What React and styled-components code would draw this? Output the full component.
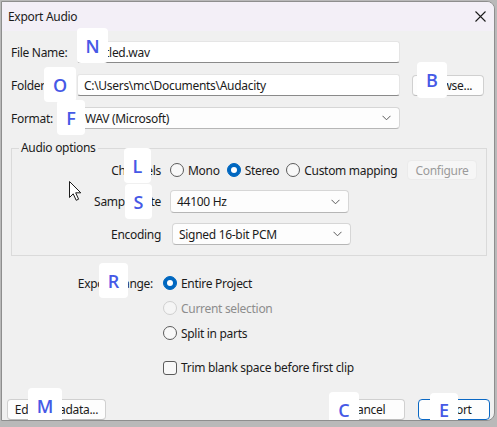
import React from 'react';
import styled, { createGlobalStyle } from 'styled-components';

const GlobalStyle = createGlobalStyle`
  html, body {
    margin: 0;
    padding: 0;
    background: #b9b9b9;
  }
  body {
    font-family: 'Noto Sans', 'Open Sans', sans-serif;
    font-size: 12px;
    letter-spacing: -0.3px;
    color: #1b1b1b;
  }
  * { box-sizing: border-box; }
`;

const Window = styled.div`
  position: relative;
  margin: 1px 0 0 1px;
  width: 494px;
  height: 420px;
  border: 1px solid #8e8e8e;
  border-radius: 0 8px 8px 0;
  background: #f0f0f0;
  display: flex;
  flex-direction: column;
  overflow: hidden;
`;

const TitleBar = styled.div`
  height: 29px;
  flex: none;
  display: flex;
  align-items: center;
  justify-content: space-between;
  padding: 0 8px 0 6px;
  background: #f3eff7;
  font-size: 12px;
`;

const Body = styled.div`
  flex: 1;
  display: flex;
  flex-direction: column;
  padding: 10px 7px 0 9px;
`;

const TopGrid = styled.div`
  display: grid;
  grid-template-columns: 66px 323px 84px;
  grid-auto-rows: 22px;
  row-gap: 11px;
  align-items: center;
`;

const Label = styled.span`
  white-space: nowrap;
  text-align: ${(p) => (p.$right ? 'right' : 'left')};
`;

const TextInput = styled.div`
  height: 22px;
  display: flex;
  align-items: center;
  padding: 0 6px;
  background: #ffffff;
  border: 1px solid #e5e5e5;
  border-bottom-color: #8a8a8a;
  border-radius: 3px;
  white-space: nowrap;
  overflow: hidden;
`;

const Select = styled.div`
  height: ${(p) => p.$h || 22}px;
  width: ${(p) => (p.$w ? `${p.$w}px` : 'auto')};
  display: flex;
  align-items: center;
  justify-content: space-between;
  padding: 0 8px 0 6px;
  margin-left: ${(p) => p.$ml || 0}px;
  background: #fdfdfd;
  border: 1px solid #d6d6d6;
  border-bottom-color: #b6b6b6;
  border-radius: 4px;
  white-space: nowrap;
`;

const Button = styled.div`
  height: ${(p) => p.$h || 21}px;
  width: ${(p) => p.$w}px;
  display: flex;
  align-items: center;
  justify-content: center;
  flex: none;
  justify-self: end;
  background: ${(p) => (p.$disabled ? '#f6f6f6' : '#fdfdfd')};
  color: ${(p) => (p.$disabled ? '#9b9b9b' : '#1b1b1b')};
  border: 1px solid
    ${(p) => (p.$primary ? '#0a68c4' : p.$disabled ? '#ebebeb' : '#d0d0d0')};
  border-bottom-color: ${(p) =>
    p.$primary ? '#0a68c4' : p.$disabled ? '#ebebeb' : '#bdbdbd'};
  border-radius: 4px;
  white-space: nowrap;
`;

const Group = styled.fieldset`
  margin: 11px 0 0 0;
  padding: 4px 9px 10px 0;
  border: 1px solid #dadada;
  border-radius: 0;
  min-width: 0;
`;

const Legend = styled.legend`
  margin-left: 7px;
  padding: 0 2px;
  line-height: 16px;
`;

const GroupGrid = styled.div`
  display: grid;
  grid-template-columns: 149px 1fr;
  grid-template-rows: 20px 23px 22px;
  column-gap: 9px;
  row-gap: 10px;
  align-items: center;
`;

const RadioRow = styled.div`
  display: flex;
  align-items: center;
  gap: 7px;
`;

const Option = styled.div`
  display: flex;
  align-items: center;
  gap: 4px;
  white-space: nowrap;
  color: ${(p) => (p.$disabled ? '#8d8d8d' : 'inherit')};
`;

const RadioDot = styled.span`
  width: 14px;
  height: 14px;
  border-radius: 50%;
  flex: none;
  background: ${(p) => (p.$checked ? '#0067c0' : p.$disabled ? '#f5f5f5' : '#f8f8f8')};
  border: 1px solid
    ${(p) => (p.$checked ? '#0067c0' : p.$disabled ? '#cfcfcf' : '#5b5b5b')};
  display: flex;
  align-items: center;
  justify-content: center;
  &::after {
    content: '';
    display: ${(p) => (p.$checked ? 'block' : 'none')};
    width: 6px;
    height: 6px;
    border-radius: 50%;
    background: #ffffff;
  }
`;

const CheckBox = styled.span`
  width: 14px;
  height: 14px;
  flex: none;
  border-radius: 3px;
  background: #f8f8f8;
  border: 1px solid #5b5b5b;
`;

const PushRight = styled.div`
  margin-left: auto;
`;

const RangeGrid = styled.div`
  display: grid;
  grid-template-columns: 142px 1fr;
  grid-template-rows: 20px 20px 20px 20px;
  column-gap: 10px;
  row-gap: 5px;
  align-items: center;
  margin-top: 17px;
`;

const CheckRow = styled.div`
  grid-column: 2;
  margin-top: 19px;
`;

const Footer = styled.div`
  flex: none;
  display: flex;
  align-items: center;
  padding: 0 4px 0 5px;
  height: 21px;
`;

const FooterRight = styled.div`
  margin-left: auto;
  display: flex;
  gap: 13px;
`;

const Badge = styled.div`
  position: absolute;
  display: flex;
  align-items: center;
  justify-content: center;
  background: #ffffff;
  border-radius: 4px;
  color: #4659e6;
  font-family: 'Open Sans', 'Noto Sans', sans-serif;
  font-size: 18px;
  font-weight: 600;
  letter-spacing: 0;
`;

const Pointer = styled.svg`
  position: absolute;
  left: 66px;
  top: 178px;
`;

const Chevron = () => (
  <svg width="9" height="6" viewBox="0 0 9 6">
    <path d="M0.5 0.8 L4.5 4.8 L8.5 0.8" fill="none" stroke="#5a5a5a" strokeWidth="1" />
  </svg>
);

const CloseIcon = () => (
  <svg width="11" height="11" viewBox="0 0 11 11">
    <path d="M0.5 0.5 L10.5 10.5 M10.5 0.5 L0.5 10.5" stroke="#1b1b1b" strokeWidth="1.1" />
  </svg>
);

const badges = [
  ['N', 75, 26, 31, 35],
  ['O', 42, 65, 32, 35],
  ['F', 55, 98, 28, 35],
  ['B', 415, 60, 30, 36],
  ['L', 122, 146, 27, 35],
  ['S', 123, 182, 27, 35],
  ['R', 97, 261, 29, 35],
  ['M', 26, 386, 34, 36],
  ['C', 327, 390, 30, 35],
  ['E', 428, 391, 28, 34],
];

export default function App() {
  return (
    <>
      <GlobalStyle />
      <Window>
        <TitleBar>
          <span>Export Audio</span>
          <CloseIcon />
        </TitleBar>
        <Body>
          <TopGrid>
            <Label>File Name:</Label>
            <TextInput>untitled.wav</TextInput>
            <span />
            <Label>Folder:</Label>
            <TextInput>C:\Users\mc\Documents\Audacity</TextInput>
            <Button $w={72}>Browse...</Button>
            <Label>Format:</Label>
            <Select $ml={1}>
              <span>WAV (Microsoft)</span>
              <Chevron />
            </Select>
            <span />
          </TopGrid>

          <Group>
            <Legend>Audio options</Legend>
            <GroupGrid>
              <Label $right>Channels</Label>
              <RadioRow>
                <Option>
                  <RadioDot />
                  Mono
                </Option>
                <Option>
                  <RadioDot $checked />
                  Stereo
                </Option>
                <Option>
                  <RadioDot />
                  Custom mapping
                </Option>
                <PushRight>
                  <Button $w={70} $h={20} $disabled>
                    Configure
                  </Button>
                </PushRight>
              </RadioRow>
              <Label $right>Sample Rate</Label>
              <Select $w={179} $h={23}>
                <span>44100 Hz</span>
                <Chevron />
              </Select>
              <Label $right>Encoding</Label>
              <Select $w={179} $ml={2}>
                <span>Signed 16-bit PCM</span>
                <Chevron />
              </Select>
            </GroupGrid>
          </Group>

          <RangeGrid>
            <Label $right>Export Range:</Label>
            <Option>
              <RadioDot $checked />
              Entire Project
            </Option>
            <span />
            <Option $disabled>
              <RadioDot $disabled />
              Current selection
            </Option>
            <span />
            <Option>
              <RadioDot />
              Split in parts
            </Option>
            <CheckRow>
              <Option>
                <CheckBox />
                Trim blank space before first clip
              </Option>
            </CheckRow>
          </RangeGrid>
        </Body>
        <Footer>
          <Button $w={99}>Edit Metadata...</Button>
          <FooterRight>
            <Button $w={75}>Cancel</Button>
            <Button $w={72} $primary>
              Export
            </Button>
          </FooterRight>
        </Footer>

        <Pointer width="15" height="22" viewBox="0 0 15 22">
          <path
            d="M1.5 1.5 L1.5 17.5 L5.2 13.8 L8.2 20.3 L10.6 19.2 L7.7 12.8 L12.8 12.8 Z"
            fill="#ffffff"
            stroke="#1b1b1b"
            strokeWidth="1"
            strokeLinejoin="round"
          />
        </Pointer>

        {badges.map(([letter, x, y, w, h]) => (
          <Badge key={letter} style={{ left: x, top: y, width: w, height: h }}>
            {letter}
          </Badge>
        ))}
      </Window>
    </>
  );
}
